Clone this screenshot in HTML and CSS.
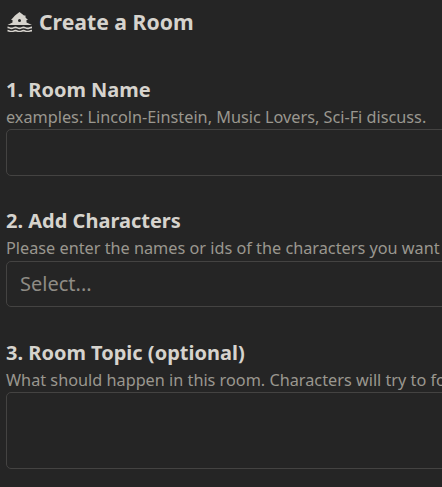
FILE: index.html
```html
<!DOCTYPE html>
<html lang="en">
<head>
<meta charset="utf-8">
<title>Create a Room</title>
<link rel="stylesheet" href="styles.css">
</head>
<body>
<main class="page">
  <h1 class="title">
    <svg class="title-icon" viewBox="0 0 26 20" aria-hidden="true">
      <path class="fill" fill-rule="evenodd" d="M13.5 0 L18 3.5 H19.5 V5.5 L22 8 H20.5 V10.5 L26 13 H1.5 L6.5 10.5 V8 H5 L9 3.5 Z M12 8.6 a1.5 1.5 0 1 0 3 0 a1.5 1.5 0 1 0 -3 0 Z"/>
      <path class="wave" d="M1.5 15.4 c2 0 2 1 4 1 s2 -1 4 -1 s2 1 4 1 s2 -1 4 -1 s2 1 4 1 s2 -1 4.5 -1"/>
      <path class="wave" d="M1.5 18.6 c2 0 2 1 4 1 s2 -1 4 -1 s2 1 4 1 s2 -1 4 -1 s2 1 4 1 s2 -1 4.5 -1"/>
    </svg>
    <span>Create a Room</span>
  </h1>
  <section class="field first">
    <h2 class="label">1. Room Name</h2>
    <p class="hint">examples: Lincoln-Einstein, Music Lovers, Sci-Fi discuss.</p>
    <div class="box box-name"></div>
  </section>
  <section class="field">
    <h2 class="label">2. Add Characters</h2>
    <p class="hint">Please enter the names or ids of the characters you want to add to this room.</p>
    <div class="box box-select">Select...</div>
  </section>
  <section class="field last">
    <h2 class="label">3. Room Topic (optional)</h2>
    <p class="hint">What should happen in this room. Characters will try to follow the topic you set here.</p>
    <div class="box box-topic"></div>
  </section>
</main>
</body>
</html>
```
FILE: styles.css
```css
html, body {
  margin: 0;
  height: 100%;
  overflow: hidden;
  background: #252525;
}
body {
  font-family: "Noto Sans", "Open Sans", sans-serif;
}
.page {
  width: 760px;
  padding: 0 6px;
}
.title {
  display: flex;
  align-items: center;
  gap: 7px;
  margin: 0;
  padding-top: 7px;
  height: 30px;
  font-size: 21.2px;
  line-height: 30px;
  font-weight: 700;
  color: #d6d3cd;
}
.title-icon {
  width: 26px;
  height: 20px;
  flex: none;
}
.fill { fill: #d6d3cd; }
.wave {
  fill: none;
  stroke: #d6d3cd;
  stroke-width: 1.6;
}
.field { margin-top: 30px; }
.field.first { margin-top: 38px; }
.field.last { margin-top: 31px; }
.label {
  margin: 0;
  font-size: 20px;
  line-height: 30px;
  font-weight: 700;
  color: #d6d3cd;
}
.hint {
  margin: 0;
  font-size: 16.25px;
  line-height: 24px;
  white-space: nowrap;
  color: #9a978f;
}
.box {
  box-sizing: border-box;
  border: 1px solid #444342;
  border-radius: 5px;
}
.box-name { height: 47px; }
.box-select {
  height: 46px;
  margin-top: 1px;
  padding-left: 13px;
  font-size: 20px;
  line-height: 44px;
  color: #8f8c85;
}
.box-topic { height: 77px; }
```
